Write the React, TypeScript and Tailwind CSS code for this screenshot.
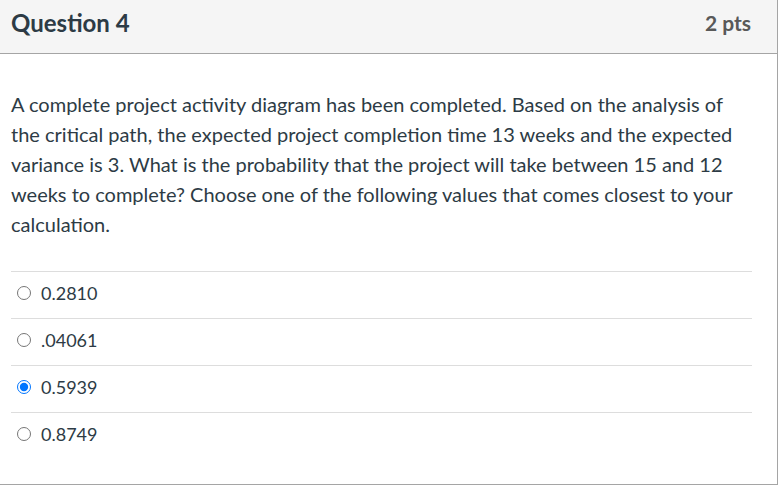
const answers = ['0.2810', '.04061', '0.5939', '0.8749']

export default function App() {
  return (
    <div className="bg-white font-['Lato','Liberation_Sans',sans-serif] text-[#2d3b45]">
      <div className="w-[778px] border-r border-b border-[#a5a5a5]">
        <div className="flex h-[54px] items-start justify-between border-b border-[#a5a5a5] bg-[#f5f5f5] pt-[8px] pl-[11px] pr-[26px]">
          <div className="text-[24px] leading-[30px] font-bold">Question 4</div>
          <div className="text-[21px] leading-[30px] font-bold text-[#595959]">2 pts</div>
        </div>

        <div className="pl-[11px] pr-[25px] pt-[35px] pb-[25px]">
          <p className="text-[20px] leading-[30px]">
            A complete project activity diagram has been completed. Based on the analysis of the
            critical path, the expected project completion time 13 weeks and the expected variance
            is 3. What is the probability that the project will take between 15 and 12 weeks to
            complete? Choose one of the following values that comes closest to your calculation.
          </p>

          <div className="mt-[32px]">
            {answers.map((a, i) => (
              <label
                key={a}
                className="flex h-[47px] items-center gap-[10px] border-t border-[#dddddd] pb-[4px] pl-[6px]"
              >
                <input
                  type="radio"
                  name="q4"
                  defaultChecked={i === 2}
                  className="m-0 h-[14px] w-[14px]"
                />
                <span className="text-[18px]">{a}</span>
              </label>
            ))}
          </div>
        </div>
      </div>
    </div>
  )
}
